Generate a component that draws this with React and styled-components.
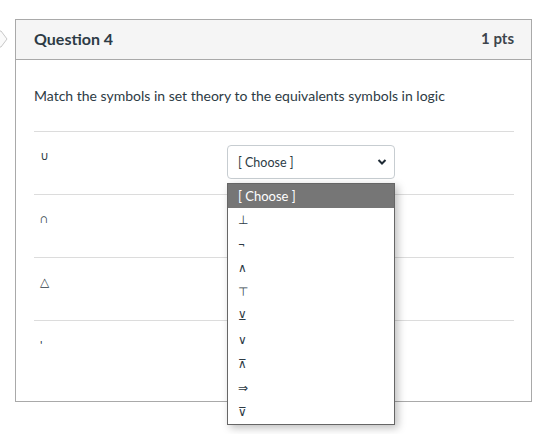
import styled, { createGlobalStyle } from 'styled-components';

const GlobalStyle = createGlobalStyle`
  html, body {
    min-height: 100%;
  }
  body {
    margin: 0;
    min-height: 434px;
    background: #ffffff;
    font-family: Lato, 'DejaVu Sans', sans-serif;
    color: #2d3b45;
  }
`;

const Page = styled.div`
  display: flex;
  align-items: flex-start;
  min-height: 434px;
  box-sizing: border-box;
  padding-top: 19px;
  gap: 6px;
`;

const Flag = styled.svg`
  flex: none;
  margin-top: 11px;
`;

const Card = styled.div`
  width: 515px;
  border: 1px solid #a9a9a9;
  background: #fff;
`;

const Header = styled.div`
  display: flex;
  align-items: center;
  justify-content: space-between;
  box-sizing: border-box;
  height: 40px;
  padding: 0 17px 3px 18px;
  background: #f5f5f5;
  border-bottom: 1px solid #a9a9a9;
  font-weight: bold;
  font-size: 16px;
`;

const Points = styled.span`
  font-size: 15px;
  color: #3d454c;
`;

const Body = styled.div`
  padding: 26px 17px 18px 18px;
`;

const Prompt = styled.p`
  margin: 0 0 25px;
  font-size: 14px;
  line-height: 20px;
`;

const Row = styled.div`
  display: flex;
  align-items: flex-start;
  height: 62px;
  border-top: 1px solid #dcdcdc;
`;

const Symbol = styled.div`
  width: 187px;
  padding: 16px 0 0 6px;
  font-size: 12px;
  line-height: 16px;
`;

const SelectWrap = styled.div`
  position: relative;
  margin-top: 13px;
`;

const Select = styled.div`
  display: flex;
  align-items: center;
  justify-content: space-between;
  box-sizing: border-box;
  width: 168px;
  height: 34px;
  padding: 0 7px 0 10px;
  border: 1px solid #c7cdd1;
  border-radius: 4px;
  font-size: 12.5px;
  background: #fff;
`;

const List = styled.ul`
  position: absolute;
  top: 38px;
  left: 0;
  z-index: 2;
  box-sizing: border-box;
  width: 168px;
  margin: 0;
  padding: 0;
  list-style: none;
  border: 1px solid #666;
  background: #fff;
  box-shadow: 3px 3px 8px rgba(0, 0, 0, 0.25);
`;

const Option = styled.li`
  height: 24px;
  line-height: 24px;
  padding-left: 10px;
  font-size: ${(p) => (p.$selected ? '13px' : '12px')};
  color: ${(p) => (p.$selected ? '#fff' : '#2d3b45')};
  background: ${(p) => (p.$selected ? '#767676' : 'transparent')};
`;

const symbols = ['∪', '∩', '△', "'"];
const options = ['⊥', '¬', '∧', '⊤', '⊻', '∨', '⊼', '⇒', '⊽'];

export default function App() {
  return (
    <>
      <GlobalStyle />
      <Page>
        <Flag width='9' height='18' viewBox='0 0 9 18'>
          <path d='M-2 1 H1 L7 9 L1 17 H-2' fill='#fafafa' stroke='#c8c8c8' strokeWidth='1' />
        </Flag>
        <Card>
          <Header>
            <span>Question 4</span>
            <Points>1 pts</Points>
          </Header>
          <Body>
            <Prompt>Match the symbols in set theory to the equivalents symbols in logic</Prompt>
            {symbols.map((s, i) => (
              <Row key={i}>
                <Symbol>{s}</Symbol>
                {i === 0 && (
                  <SelectWrap>
                    <Select>
                      <span>[ Choose ]</span>
                      <svg width='10' height='8' viewBox='0 0 10 8'>
                        <path d='M1.5 2 L5 5.5 L8.5 2' fill='none' stroke='#1f2b36' strokeWidth='2' />
                      </svg>
                    </Select>
                    <List>
                      <Option $selected>[ Choose ]</Option>
                      {options.map((o) => (
                        <Option key={o}>{o}</Option>
                      ))}
                    </List>
                  </SelectWrap>
                )}
              </Row>
            ))}
          </Body>
        </Card>
      </Page>
    </>
  );
}
